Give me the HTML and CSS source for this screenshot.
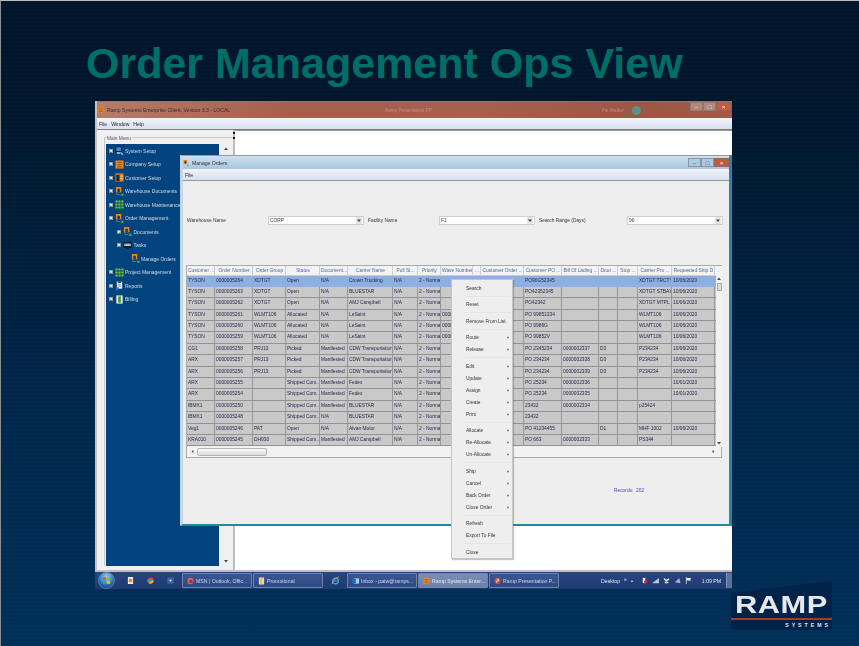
FILE: index.html
```html
<!DOCTYPE html>
<html lang="en">
<head>
<meta charset="utf-8">
<title>Order Management Ops View</title>
<link rel="stylesheet" href="styles.css">
</head>
<body>
<svg class="defs" width="0" height="0" aria-hidden="true">
  <symbol id="i-doc" viewBox="0 0 10 10"><path d="M1 0h6v6H1z" fill="#e8861e"/><path d="M2.600 2h2.800v4H2.600z" fill="#0a3f73"/><path d="M2 6v2.500h4" fill="none" stroke="#9fb8d0" stroke-width=".5"/><path d="M7 7.500h2.400v2.400H7z" fill="#58b030"/></symbol>
  <symbol id="i-grid" viewBox="0 0 10 10"><g fill="#7cc52c"><path d="M.5.500h2.400v2.400H.5zM3.800.500h2.400v2.400H3.800zM7.100.500h2.400v2.400H7.100zM.5 3.800h2.400v2.400H.5zM3.800 3.800h2.400v2.400H3.800zM7.100 3.800h2.400v2.400H7.100zM.5 7.100h2.400v2.400H.5zM3.800 7.100h2.400v2.400H3.800zM7.100 7.100h2.400v2.400H7.100z"/></g></symbol>
  <symbol id="i-sys" viewBox="0 0 10 10"><path d="M.5.500h7v6h-7z" fill="#0b2340"/><path d="M1.500 1.500h5v4h-5z" fill="#3f8fd8"/><path d="M6 6l3.500 3.500-2 .2z" fill="#e8e8e8"/><path d="M2 7h4v1.500H2z" fill="#ddd"/></symbol>
  <symbol id="i-bldg" viewBox="0 0 10 10"><path d="M.5.500h9v9h-9z" fill="#e8861e"/><path d="M2.500 2h5v1.200h-5zM2.500 4.500h5v1.200h-5zM2.500 7h5v1.200h-5z" fill="#a85a10"/></symbol>
  <symbol id="i-cust" viewBox="0 0 10 10"><path d="M.5.500h9v9h-9z" fill="#e8861e"/><path d="M1.500 2h3.500v7H1.500z" fill="#152a40"/><path d="M6 3h2.500v1H6zM6 5.500h2.500v1H6z" fill="#f6e0b0"/></symbol>
  <symbol id="i-task" viewBox="0 0 10 10"><path d="M.5 1h9v6.500h-9z" fill="#0b1c30"/><path d="M1.500 3h7v2.500h-7z" fill="#e8eef6"/><path d="M2 3.800h1.500v.8H2zM4.200 3.800h1.500v.8H4.200zM6.400 3.800h1.500v.8H6.400z" fill="#2a64b0"/><path d="M4 7.500h2V9H4z" fill="#0b1c30"/></symbol>
  <symbol id="i-rep" viewBox="0 0 10 10"><path d="M2 .5h6v8H2z" fill="#f2f2f2"/><path d="M3 .2h4v2H3z" fill="#2b4a70"/><path d="M3 4h4v.7H3zM3 6h4v.7H3z" fill="#666"/><path d="M1 7h3v2.800H1z" fill="#3a6fb0"/></symbol>
  <symbol id="i-bill" viewBox="0 0 10 10"><path d="M1.500.5h7v9h-7z" fill="#f0f0f0"/><path d="M3.500 1.500h3v7h-3z" fill="#3f9a3a"/></symbol>
  <symbol id="i-arrow" viewBox="0 0 4 4"><path d="M.8 0l2.400 2-2.400 2z" fill="#333"/></symbol>
  <symbol id="i-down" viewBox="0 0 6 6"><path d="M1 2h4L3 4.500z" fill="#444"/></symbol>
</svg>

<main class="slide">
  <h1 class="headline">Order Management Ops View</h1>

  <div class="desktop">
    <div class="app">
      <header class="app-title">
        <svg class="title-icon" viewBox="0 0 10 10"><use href="#i-bldg"/></svg>
        <span class="app-name">Ramp Systems Enterprise Client, Version 3.3 - LOCAL</span>
        <span class="app-ghost">Ramp Presentation PP</span>
        <span class="app-ghost user">Pat Walker</span>
        <span class="avatar"></span>
        <span class="controls">
          <span class="ctl">&#8211;</span><span class="ctl">&#9633;</span><span class="ctl close">&#215;</span>
        </span>
      </header>
      <nav class="menubar"><span>File</span><span>Window</span><span>Help</span></nav>
      <div class="app-body">
        <aside class="side">
          <div class="side-box">
            <div class="side-label">Main Menu</div>
            <div class="tree-wrap">
              <ul class="tree">
                <li><b class="exp">+</b><svg class="ti"><use href="#i-sys"/></svg><span>System Setup</span></li>
                <li><b class="exp">+</b><svg class="ti"><use href="#i-bldg"/></svg><span>Company Setup</span></li>
                <li><b class="exp">+</b><svg class="ti"><use href="#i-cust"/></svg><span>Customer Setup</span></li>
                <li><b class="exp">+</b><svg class="ti"><use href="#i-doc"/></svg><span>Warehouse Documents</span></li>
                <li><b class="exp">+</b><svg class="ti"><use href="#i-grid"/></svg><span>Warehouse Maintenance</span></li>
                <li><b class="exp">&#8211;</b><svg class="ti"><use href="#i-doc"/></svg><span>Order Management</span></li>
                <li class="lvl1"><b class="exp">+</b><svg class="ti"><use href="#i-doc"/></svg><span>Documents</span></li>
                <li class="lvl1"><b class="exp">&#8211;</b><svg class="ti"><use href="#i-task"/></svg><span>Tasks</span></li>
                <li class="lvl2"><svg class="ti"><use href="#i-doc"/></svg><span>Manage Orders</span></li>
                <li><b class="exp">+</b><svg class="ti"><use href="#i-grid"/></svg><span>Project Management</span></li>
                <li><b class="exp">+</b><svg class="ti"><use href="#i-rep"/></svg><span>Reports</span></li>
                <li><b class="exp">+</b><svg class="ti"><use href="#i-bill"/></svg><span>Billing</span></li>
              </ul>
              <div class="side-scroll"><svg class="up" viewBox="0 0 6 6"><path d="M1 4h4L3 1.500z" fill="#444"/></svg><svg class="up" viewBox="0 0 6 6"><use href="#i-down"/></svg></div>
            </div>
          </div>
        </aside>
        <div class="splitter"><i></i><i></i></div>
        <div class="workspace"></div>
      </div>
    </div>

    <section class="child">
      <header class="child-title">
        <svg class="title-icon" viewBox="0 0 10 10"><use href="#i-doc"/></svg>
        <span class="child-name">Manage Orders</span>
        <span class="controls">
          <span class="ctl soft">&#8211;</span><span class="ctl soft">&#9633;</span><span class="ctl close">&#215;</span>
        </span>
      </header>
      <nav class="menubar child-menu"><span>File</span></nav>
      <div class="child-body">
        <div class="filters">
          <label class="f1">Warehouse Name</label>
          <div class="combo">CORP<svg viewBox="0 0 6 6"><use href="#i-down"/></svg></div>
          <label class="f2">Facility Name</label>
          <div class="combo">F1<svg viewBox="0 0 6 6"><use href="#i-down"/></svg></div>
          <label class="f3">Search Range (Days)</label>
          <div class="combo">90<svg viewBox="0 0 6 6"><use href="#i-down"/></svg></div>
        </div>

        <div class="table-panel">
          <div class="table-main">
            <div class="table">
              <div class="tr th"><span>Customer ...</span><span>Order Number</span><span>Order Group</span><span>Status</span><span>Document...</span><span>Carrier Name</span><span>Pull St...</span><span>Priority</span><span>Wave Number</span><span>...</span><span>Customer Order ...</span><span>Customer PO ...</span><span>Bill Of Lading ...</span><span>Door ...</span><span>Stop ...</span><span>Carrier Pro ...</span><span>Requested Ship D</span></div>
              <div class="tr sel"><span>TYSON</span><span>0000005264</span><span>XDTGT</span><span>Open</span><span>N/A</span><span>Crown Trucking</span><span>N/A</span><span>2 - Normal</span><span></span><span></span><span></span><span>PO90G52345</span><span></span><span></span><span></span><span>XDTGT TRCTY</span><span>10/06/2020</span></div>
              <div class="tr"><span>TYSON</span><span>0000005263</span><span>XDTGT</span><span>Open</span><span>N/A</span><span>BLUESTAR</span><span>N/A</span><span>2 - Normal</span><span></span><span></span><span></span><span>PO42352345</span><span></span><span></span><span></span><span>XDTGT STBAY</span><span>10/06/2020</span></div>
              <div class="tr"><span>TYSON</span><span>0000005262</span><span>XDTGT</span><span>Open</span><span>N/A</span><span>AMJ Campbell</span><span>N/A</span><span>2 - Normal</span><span></span><span></span><span></span><span>PO42342</span><span></span><span></span><span></span><span>XDTGT MTPL</span><span>10/06/2020</span></div>
              <div class="tr"><span>TYSON</span><span>0000005261</span><span>WLMT106</span><span>Allocated</span><span>N/A</span><span>LeSaint</span><span>N/A</span><span>2 - Normal</span><span>0000</span><span></span><span></span><span>PO 99851334</span><span></span><span></span><span></span><span>WLMT106</span><span>10/06/2020</span></div>
              <div class="tr"><span>TYSON</span><span>0000005260</span><span>WLMT106</span><span>Allocated</span><span>N/A</span><span>LeSaint</span><span>N/A</span><span>2 - Normal</span><span>0000</span><span></span><span></span><span>PO 9986G</span><span></span><span></span><span></span><span>WLMT106</span><span>10/06/2020</span></div>
              <div class="tr"><span>TYSON</span><span>0000005259</span><span>WLMT106</span><span>Allocated</span><span>N/A</span><span>LeSaint</span><span>N/A</span><span>2 - Normal</span><span>0000</span><span></span><span></span><span>PO 99852V</span><span></span><span></span><span></span><span>WLMT106</span><span>10/06/2020</span></div>
              <div class="tr"><span>CG1</span><span>0000005258</span><span>PRJ13</span><span>Picked</span><span>Manifested</span><span>CDW Transportation</span><span>N/A</span><span>2 - Normal</span><span></span><span></span><span></span><span>PO 2345234</span><span>0000002337</span><span>D3</span><span></span><span>P234234</span><span>10/06/2020</span></div>
              <div class="tr"><span>ARX</span><span>0000005257</span><span>PRJ13</span><span>Picked</span><span>Manifested</span><span>CDW Transportation</span><span>N/A</span><span>2 - Normal</span><span></span><span></span><span></span><span>PO 234234</span><span>0000002338</span><span>D3</span><span></span><span>P234234</span><span>10/06/2020</span></div>
              <div class="tr"><span>ARX</span><span>0000005256</span><span>PRJ13</span><span>Picked</span><span>Manifested</span><span>CDW Transportation</span><span>N/A</span><span>2 - Normal</span><span></span><span></span><span></span><span>PO 234234</span><span>0000002339</span><span>D3</span><span></span><span>P234234</span><span>10/06/2020</span></div>
              <div class="tr"><span>ARX</span><span>0000005255</span><span></span><span>Shipped Com...</span><span>Manifested</span><span>Fedex</span><span>N/A</span><span>2 - Normal</span><span></span><span></span><span></span><span>PO 25234</span><span>0000002336</span><span></span><span></span><span></span><span>10/01/2020</span></div>
              <div class="tr"><span>ARX</span><span>0000005254</span><span></span><span>Shipped Com...</span><span>Manifested</span><span>Fedex</span><span>N/A</span><span>2 - Normal</span><span></span><span></span><span></span><span>PO 25234</span><span>0000002335</span><span></span><span></span><span></span><span>10/01/2020</span></div>
              <div class="tr"><span>IBMX1</span><span>0000005250</span><span></span><span>Shipped Com...</span><span>Manifested</span><span>BLUESTAR</span><span>N/A</span><span>2 - Normal</span><span></span><span></span><span></span><span>23432</span><span>0000002334</span><span></span><span></span><span>p25424</span><span></span></div>
              <div class="tr"><span>IBMX1</span><span>0000005248</span><span></span><span>Shipped Com...</span><span>N/A</span><span>BLUESTAR</span><span>N/A</span><span>2 - Normal</span><span></span><span></span><span></span><span>23432</span><span></span><span></span><span></span><span></span><span></span></div>
              <div class="tr"><span>Veg1</span><span>0000005246</span><span>PAT</span><span>Open</span><span>N/A</span><span>Alvan Motor</span><span>N/A</span><span>2 - Normal</span><span></span><span></span><span></span><span>PO 41234455</span><span></span><span>D1</span><span></span><span>MHF 1002</span><span>10/06/2020</span></div>
              <div class="tr"><span>KRA010</span><span>0000005245</span><span>DH930</span><span>Shipped Com...</span><span>Manifested</span><span>AMJ Campbell</span><span>N/A</span><span>2 - Normal</span><span></span><span></span><span></span><span>PO 663</span><span>0000002333</span><span></span><span></span><span>PS344</span><span></span></div>
            </div>
            <div class="vscroll"><svg viewBox="0 0 6 6"><path d="M1 4h4L3 1.500z" fill="#444"/></svg><i></i><svg class="vdown" viewBox="0 0 6 6"><use href="#i-down"/></svg></div>
          </div>
          <div class="hscroll"><svg viewBox="0 0 4 4"><path d="M3.200 0L.8 2l2.400 2z" fill="#333"/></svg><i></i><svg class="hright" viewBox="0 0 4 4"><use href="#i-arrow"/></svg></div>
        </div>

        <div class="records">Records:&nbsp; 202</div>
      </div>
    </section>

    <div class="ctx">
      <div class="mi">Search</div>
      <hr>
      <div class="mi">Reset</div>
      <hr>
      <div class="mi">Remove From List</div>
      <hr>
      <div class="mi sub">Route<svg><use href="#i-arrow"/></svg></div>
      <div class="mi sub">Release<svg><use href="#i-arrow"/></svg></div>
      <hr>
      <div class="mi sub">Edit<svg><use href="#i-arrow"/></svg></div>
      <div class="mi sub">Update<svg><use href="#i-arrow"/></svg></div>
      <div class="mi sub">Assign<svg><use href="#i-arrow"/></svg></div>
      <div class="mi sub">Create<svg><use href="#i-arrow"/></svg></div>
      <div class="mi sub">Print<svg><use href="#i-arrow"/></svg></div>
      <hr>
      <div class="mi sub">Allocate<svg><use href="#i-arrow"/></svg></div>
      <div class="mi sub">Re-Allocate<svg><use href="#i-arrow"/></svg></div>
      <div class="mi sub">Un-Allocate<svg><use href="#i-arrow"/></svg></div>
      <hr>
      <div class="mi sub">Ship<svg><use href="#i-arrow"/></svg></div>
      <div class="mi sub">Cancel<svg><use href="#i-arrow"/></svg></div>
      <div class="mi sub">Back Order<svg><use href="#i-arrow"/></svg></div>
      <div class="mi sub">Close Order<svg><use href="#i-arrow"/></svg></div>
      <hr>
      <div class="mi">Refresh</div>
      <div class="mi">Export To File</div>
      <hr>
      <div class="mi">Close</div>
    </div>

    <footer class="taskbar">
      <svg class="orb" viewBox="0 0 20 20">
        <defs><radialGradient id="orbg" cx=".5" cy=".3" r=".75"><stop offset="0" stop-color="#9fd8f4"/><stop offset=".55" stop-color="#2f7fb8"/><stop offset="1" stop-color="#123c74"/></radialGradient></defs>
        <circle cx="10" cy="10" r="9.500" fill="url(#orbg)" stroke="#8aa4c4" stroke-width=".6"/>
        <path d="M6 6h3.600v3.600H6z" fill="#e8542a"/><path d="M10.400 6H14v3.600h-3.600z" fill="#7cc243"/><path d="M6 10.400h3.600V14H6z" fill="#2f9be0"/><path d="M10.400 10.400H14V14h-3.600z" fill="#f4c020"/>
      </svg>
      <svg class="qi q1" viewBox="0 0 8 8"><path d="M1 0h6v8H1z" fill="#e9f1fa"/><path d="M2 2h4v4H2z" fill="#ec8a1e"/></svg>
      <svg class="qi q2" viewBox="0 0 8 8"><circle cx="4" cy="4" r="3.500" fill="#d9453a"/><path d="M4 4L7.500 4A3.500 3.500 0 0 1 2 7z" fill="#e9c22c"/><path d="M4 4L2 7A3.500 3.500 0 0 1 .8 2.500z" fill="#3ca650"/><circle cx="4" cy="4" r="1.500" fill="#4a8be8"/></svg>
      <svg class="qi q3" viewBox="0 0 8 8"><path d="M.5.500h7v7h-7z" fill="#3a6aa8"/><path d="M2.500 3h3L4 5.500z" fill="#dfe8f4"/></svg>
      <div class="task t1"><svg viewBox="0 0 8 8"><circle cx="4" cy="4" r="3.600" fill="#e8622a"/><circle cx="4.500" cy="4.500" r="2" fill="#6a2fb0"/></svg><span>MSN | Outlook, Offic...</span></div>
      <div class="task"><svg viewBox="0 0 8 8"><path d="M1 0h6v8H1z" fill="#efd98a"/><path d="M3 0h1v8H3z" fill="#cdaa48"/></svg><span>Promotional</span></div>
      <svg class="qi ie" viewBox="0 0 10 10"><circle cx="5" cy="5.500" r="3.200" fill="none" stroke="#4aa4e8" stroke-width="1.300"/><path d="M2.500 5.500h5" stroke="#4aa4e8" stroke-width="1"/><path d="M1 9C2 5 6 1.500 9 1" fill="none" stroke="#f0c030" stroke-width=".7"/></svg>
      <div class="task"><svg viewBox="0 0 8 8"><path d="M2 1h6v6H2z" fill="#a8d0f0"/><path d="M0 1.500h4.500v5H0z" fill="#1b6fc0"/></svg><span>Inbox - patw@ramps...</span></div>
      <div class="task active"><svg viewBox="0 0 10 10"><use href="#i-bldg"/></svg><span>Ramp Systems Enter...</span></div>
      <div class="task"><svg viewBox="0 0 8 8"><circle cx="4" cy="4" r="3.600" fill="#d24a26"/><path d="M3 2h2v2H3v2" fill="none" stroke="#fff" stroke-width=".8"/></svg><span>Ramp Presentation P...</span></div>
      <div class="tray">
        <span class="desk">Desktop</span><span class="chev">&#187;</span><span class="tri">&#9652;</span>
        <svg viewBox="0 0 8 8"><path d="M2 1h3v6H2z" fill="#eee"/><circle cx="5.500" cy="5.500" r="2" fill="#d22"/></svg>
        <svg viewBox="0 0 8 8"><path d="M0 7L8 1v6z" fill="#b9c4d4"/></svg>
        <svg viewBox="0 0 8 8"><path d="M1 1l3 2 3-2v2L4 5 1 3zM2 5.500h4V7H2z" fill="#e9eef6"/></svg>
        <svg viewBox="0 0 8 8"><path d="M1 6L6 1l1.500 6z" fill="#a9b4c6"/></svg>
        <svg viewBox="0 0 8 8"><path d="M1 0h.8v8H1zM2 1h5L6 2.500 7 4H2z" fill="#eef2f8"/></svg>
        <span class="clock">1:09 PM</span>
      </div>
      <span class="showdesk"></span>
    </footer>
  </div>

  <div class="logo">
    <svg class="logo-bg" viewBox="0 0 101 49" preserveAspectRatio="none"><path d="M0 12L99 0q2 0 2 2v45q0 2-2 2H2q-2 0-2-2z" fill="#01234a"/></svg>
    <div class="logo-ramp">RAMP</div>
    <div class="logo-bar"></div>
    <div class="logo-sys">SYSTEMS</div>
  </div>
</main>
</body>
</html>
```
FILE: styles.css
```css
* { box-sizing: border-box; }
html, body { margin: 0; padding: 0; }
body {
  width: 859px;
  height: 646px;
  overflow: hidden;
  font-family: "Liberation Sans", Arial, sans-serif;
}
.defs { position: absolute; }

.slide {
  position: relative;
  width: 859px;
  height: 646px;
  overflow: hidden;
  background:
    repeating-linear-gradient(180deg, rgba(255,255,255,.008) 0 2px, rgba(0,0,0,.012) 2px 4px),
    linear-gradient(180deg, #00142a 0, #00182f 20%, #00264b 62%, #003059 100%);
  border-top: 1px solid #bdbdbd;
  border-left: 1px solid #8a8f96;
  padding-top: 37px;
}
.headline {
  margin: 0 0 0 85px;
  height: 63px;
  font-size: 43px;
  line-height: 50px;
  font-weight: 700;
  color: #006e68;
}

.desktop {
  position: relative;
  margin-left: 94px;
  width: 637px;
  height: 488px;
  display: flex;
  flex-direction: column;
  filter: blur(.38px);
  font-size: 4.85px;
  color: #333;
}

/* main window */
.app {
  flex: 1;
  min-height: 0;
  display: flex;
  flex-direction: column;
  background: #f4f4f6;
  border-left: 2px solid #c9c4c0;
  border-bottom: 2px solid #bfbfbf;
}
.app-title {
  height: 17px;
  display: flex;
  align-items: center;
  padding-left: 1px;
  font-size: 5.1px;
  background: linear-gradient(90deg, #b67c6a 0, #a5604c 30%, #a5604e 60%, #9b5644 85%, #a25a48 100%);
  border-top: 1px solid #8c7a72;
}
.title-icon { width: 6px; height: 8px; flex: none; margin-right: 3px; }
.app-name { color: #3a2a26; width: 278px; flex: none; white-space: nowrap; }
.app-ghost { color: #c08e7e; font-size: 4.6px; white-space: nowrap; }
.app-ghost.user { margin-left: 170px; }
.avatar { width: 9px; height: 9px; border-radius: 50%; background: #5c9088; margin-left: 8px; }
.controls { margin-left: auto; display: flex; align-self: flex-start; margin-right: 1px; }
.ctl {
  width: 13px;
  height: 9px;
  display: flex;
  align-items: center;
  justify-content: center;
  color: #eee;
  font-size: 6px;
  background: rgba(200,190,190,.45);
  border: 1px solid rgba(120,110,110,.6);
}
.ctl.close { background: #c25a40; width: 15px; color: #fff; }
.ctl.soft { background: rgba(170,200,225,.8); color: #556; }

.menubar {
  height: 12px;
  display: flex;
  align-items: center;
  gap: 4px;
  padding-left: 2px;
  font-size: 5.1px;
  background: linear-gradient(180deg, #f2f4fb, #d8dff0);
  border-bottom: 1px solid #7d7d7d;
  color: #222;
}
.app-body { flex: 1; min-height: 0; display: flex; }

.side {
  width: 136px;
  flex: none;
  background: #f0f0f0;
  padding: 7px 0 4px 7px;
  display: flex;
}
.side-box {
  position: relative;
  flex: 1;
  min-width: 0;
  padding: 6px 0 0 1px;
  border: .6px solid #c9c9c9;
  border-right: 0;
  border-bottom: 0;
}
.side-label {
  position: absolute;
  left: 2px;
  top: -2.500px;
  color: #556;
  background: #f0f0f0;
  padding-right: 1px;
  line-height: 5px;
}
.tree-wrap { display: flex; height: 100%; }
.tree {
  list-style: none;
  margin: 0;
  padding: 0;
  width: 113px;
  height: 100%;
  background: #04447e;
  color: #cfdbe8;
  font-size: 5px;
}
.tree li {
  height: 13.500px;
  display: flex;
  align-items: center;
  padding-left: 2.500px;
  white-space: nowrap;
}
.tree li.lvl1 { padding-left: 11px; }
.tree li.lvl2 { padding-left: 24.500px; }
.exp {
  width: 4px;
  height: 4px;
  flex: none;
  margin-right: 2px;
  background: #e8e8e8;
  color: #222;
  border: .5px solid #999;
  font-size: 4px;
  line-height: 3px;
  text-align: center;
  font-weight: 400;
}
.ti { width: 9px; height: 9px; flex: none; margin-right: 1.500px; }
.side-scroll {
  width: 14px;
  flex: none;
  background: #f0f0f0;
  display: flex;
  flex-direction: column;
  justify-content: space-between;
  align-items: center;
  padding: 2px 0;
}
.up { width: 6px; height: 6px; }
.splitter {
  width: 2px;
  flex: none;
  background: #bcbcbc;
  display: flex;
  flex-direction: column;
  gap: 3px;
  padding-top: 2px;
}
.splitter i { display: block; width: 2px; height: 2px; background: #111; }
.workspace { flex: 1; background: #fff; border-top: 1px solid #9a9a9a; }

/* child window */
.child {
  position: absolute;
  left: 85px;
  top: 54px;
  width: 552px;
  height: 371px;
  display: flex;
  flex-direction: column;
  background: #eee;
  border-left: 3px solid #c4d6e4;
  border-right: 3px solid #2a86a8;
  border-bottom: 2px solid #1f8c9c;
  border-top: 1px solid #9a9a9a;
}
.child-title {
  height: 13px;
  display: flex;
  align-items: center;
  background: linear-gradient(180deg, #cfe0ef, #a9c6de);
  flex: none;
}
.child-name { color: #333; font-size: 5.1px; }
.child-title .controls { align-self: center; margin-right: 0; }
.child-menu { flex: none; border-bottom-color: #999; }
.child-body { flex: 1; min-height: 0; padding: 35px 3px 0 3px; background: #eee; }

.filters {
  height: 9px;
  display: flex;
  align-items: center;
  color: #333;
}
.filters label { white-space: nowrap; }
.f1 { width: 81px; margin-left: 1px; flex: none; }
.f2 { width: 71px; margin-left: 4px; flex: none; }
.f3 { width: 88px; margin-left: 4px; flex: none; }
.combo {
  width: 96px;
  height: 9px;
  flex: none;
  display: flex;
  align-items: center;
  padding-left: 1px;
  background: #fff;
  border: .5px solid #cfcfcf;
  position: relative;
}
.combo svg { width: 6px; height: 7px; margin-left: auto; margin-right: 1px; background: #e4e4e4; }

.table-panel {
  margin: 39.500px 4px 0 0;
  height: 193px;
  display: flex;
  flex-direction: column;
  border: .5px solid #aaa;
  background: #f1f1f1;
}
.table-main { display: flex; height: 181.500px; }
.table { width: 529px; flex: none; overflow: hidden; }
.tr {
  display: grid;
  grid-template-columns: 28px 38px 33px 34px 28px 45px 25px 23px 32px 8px 43px 38px 37px 19px 20px 34px 43px;
  height: 11.400px;
  background: #c9c9c9;
  border-bottom: 1.200px solid #939393;
  color: #26264a;
}
.tr span {
  display: block;
  padding-left: 1px;
  white-space: nowrap;
  overflow: hidden;
  line-height: 10px;
  border-right: 1px solid #989898;
}
.tr.sel { background: #8eafe2; border-bottom-color: #8eafe2; }
.tr.sel span { border-right-color: #8eafe2; }
.tr.th {
  height: 10px;
  background: #f3f3f3;
  border-bottom: .5px solid #ccc;
  color: #4d6a96;
}
.tr.th span {
  text-align: center;
  line-height: 9.500px;
  border-right: 1px solid #cfcfcf;
}
.vscroll {
  flex: 1;
  display: flex;
  flex-direction: column;
  align-items: center;
  background: #f2f2f2;
}
.vscroll svg { width: 6px; height: 6px; flex: none; margin-top: 10px; }
.vscroll i { width: 5px; height: 8px; background: #dcdcdc; border: .5px solid #aaa; margin-top: 1px; }
.vscroll .vdown { margin-top: auto; margin-bottom: 1px; }
.hscroll {
  flex: 1;
  display: flex;
  align-items: center;
  background: #f2f2f2;
  padding: 0 6px 0 4px;
}
.hscroll svg { width: 3px; height: 3px; flex: none; }
.hscroll i { width: 70px; height: 8px; margin-left: 3px; border-radius: 2px; background: linear-gradient(180deg,#f8f8f8,#dcdcdc); border: .5px solid #b5b5b5; }
.hscroll .hright { margin-left: auto; }
.records {
  margin: 30px 0 0 428px;
  color: #4a4aa8;
  white-space: nowrap;
}

/* context menu */
.ctx {
  position: absolute;
  left: 356px;
  top: 178px;
  width: 62px;
  height: 280px;
  padding: 2px 1px 0 1px;
  background: #eeeeee;
  border: 1px solid #c5c5c5;
  box-shadow: 1px 1px 1px rgba(90,90,90,.35);
  color: #333;
}
.mi {
  height: 12px;
  display: flex;
  align-items: center;
  padding-left: 13px;
  white-space: nowrap;
}
.mi svg { width: 2.500px; height: 3px; margin-left: auto; margin-right: 1.500px; }
.ctx hr {
  height: 4.500px;
  margin: 0 0 0 12px;
  padding: 2px 0 0;
  border: 0;
  background: linear-gradient(#e3e3e3,#e3e3e3) center / 100% .8px no-repeat;
}

/* taskbar */
.taskbar {
  height: 17px;
  flex: none;
  display: flex;
  align-items: center;
  position: relative;
  font-size: 5.2px;
  background: linear-gradient(180deg, #2a4480, #1d3a72);
  color: #dfe6f2;
}
.orb { width: 17px; height: 17px; margin-left: 3px; flex: none; }
.qi { width: 7px; height: 7px; flex: none; }
.q1 { margin-left: 12px; }
.q2 { margin-left: 13px; }
.q3 { margin-left: 13px; }
.task {
  width: 70px;
  height: 15px;
  flex: none;
  display: flex;
  align-items: center;
  gap: 2px;
  margin-right: 1px;
  padding-left: 4px;
  white-space: nowrap;
  color: #ccd6e6;
  background: linear-gradient(180deg, #3c5690, #2d4a86);
  border: .5px solid #6c83aa;
  border-radius: 1px;
}
.task svg { width: 7px; height: 8px; flex: none; }
.t1 { margin-left: 8px; }
.task.active { background: linear-gradient(180deg, #7a8fb4, #6a80a8); color: #e4e9f2; }
.ie { width: 9px; height: 9px; margin: 0 7px 0 7px; }
.tray {
  margin-left: 41px;
  display: flex;
  align-items: center;
  gap: 4px;
}
.tray svg { width: 7px; height: 7px; flex: none; }
.desk { margin-right: 0; }
.chev { font-size: 5px; margin-top: -4px; }
.tri { font-size: 4px; margin-right: 4px; }
.clock { margin-left: 6px; white-space: nowrap; }
.showdesk {
  position: absolute;
  right: 0;
  top: 1px;
  bottom: 1px;
  width: 6px;
  background: rgba(170,190,220,.4);
  border-left: .5px solid #7a90b8;
}

/* logo */
.logo {
  position: absolute;
  left: 730px;
  top: 580px;
  width: 101px;
  height: 49px;
  color: #e6e8ea;
}
.logo-bg { position: absolute; inset: 0; width: 100%; height: 100%; }
.logo-ramp {
  position: absolute;
  left: 4px;
  top: 12px;
  font-size: 23.500px;
  line-height: 24px;
  font-weight: 700;
  transform-origin: 0 0;
  transform: scaleX(1.31);
  letter-spacing: .4px;
}
.logo-bar { position: absolute; left: 0; right: 0; top: 37px; height: 2px; background: #a63c22; }
.logo-sys {
  position: absolute;
  right: 4px;
  top: 41px;
  font-size: 5.200px;
  line-height: 7px;
  font-weight: 700;
  letter-spacing: 3px;
  margin-right: -3px;
}
```
